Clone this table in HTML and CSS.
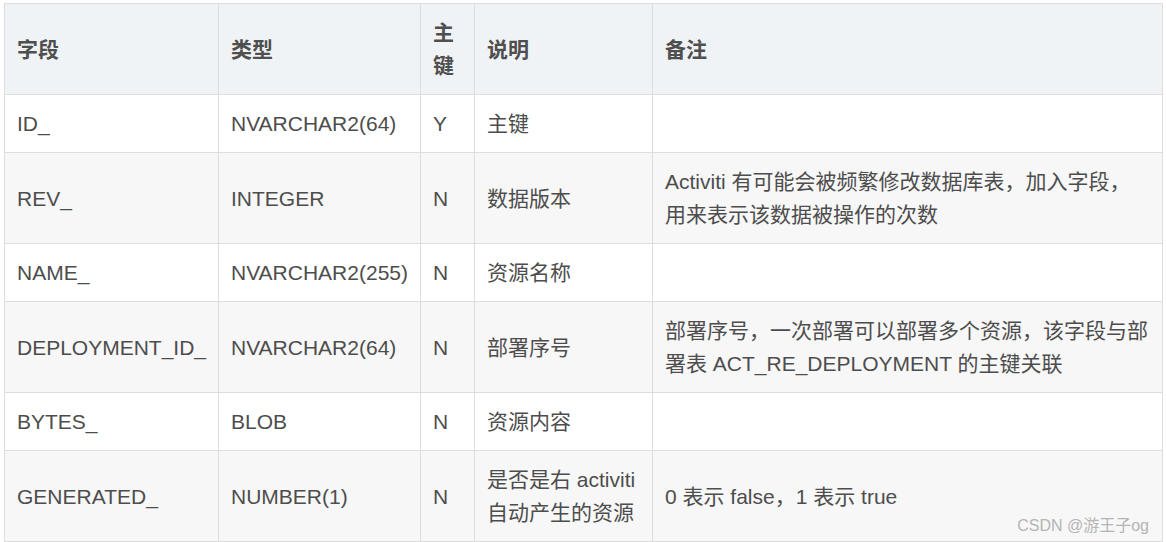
FILE: index.html
```html
<!DOCTYPE html>
<html lang="zh-CN">
<head>
<meta charset="utf-8">
<title>ACT_GE_BYTEARRAY</title>
<link rel="stylesheet" href="styles.css">
</head>
<body>
<div class="page">
  <table class="schema">
    <colgroup>
      <col class="c-field">
      <col class="c-type">
      <col class="c-pk">
      <col class="c-desc">
      <col class="c-note">
    </colgroup>
    <thead>
      <tr>
        <th>字段</th>
        <th>类型</th>
        <th>主键</th>
        <th>说明</th>
        <th>备注</th>
      </tr>
    </thead>
    <tbody>
      <tr>
        <td>ID_</td>
        <td>NVARCHAR2(64)</td>
        <td>Y</td>
        <td>主键</td>
        <td></td>
      </tr>
      <tr>
        <td>REV_</td>
        <td>INTEGER</td>
        <td>N</td>
        <td>数据版本</td>
        <td>Activiti 有可能会被频繁修改数据库表，加入字段，用来表示该数据被操作的次数</td>
      </tr>
      <tr>
        <td>NAME_</td>
        <td>NVARCHAR2(255)</td>
        <td>N</td>
        <td>资源名称</td>
        <td></td>
      </tr>
      <tr>
        <td class="nowrap">DEPLOYMENT_ID_</td>
        <td>NVARCHAR2(64)</td>
        <td>N</td>
        <td>部署序号</td>
        <td>部署序号，一次部署可以部署多个资源，该字段与部署表 ACT_RE_DEPLOYMENT 的主键关联</td>
      </tr>
      <tr>
        <td>BYTES_</td>
        <td>BLOB</td>
        <td>N</td>
        <td>资源内容</td>
        <td></td>
      </tr>
      <tr>
        <td>GENERATED_</td>
        <td>NUMBER(1)</td>
        <td>N</td>
        <td>是否是右 activiti 自动产生的资源</td>
        <td>0 表示 false，1 表示 true</td>
      </tr>
    </tbody>
  </table>
  <div class="watermark">CSDN @游王子og</div>
</div>
</body>
</html>
```

FILE: styles.css
```css
html, body {
  margin: 0;
  padding: 0;
  background: #ffffff;
}

.page {
  position: relative;
  padding: 3px 0 0 4px;
  width: 1158px;
  height: 539px;
  font-family: "Liberation Sans", Arial, "Noto Sans CJK SC", sans-serif;
}

.schema {
  border-collapse: collapse;
  table-layout: fixed;
  width: 1158px;
  font-size: 21px;
  line-height: 33px;
  color: #4d4d4d;
}

.c-field { width: 214px; }
.c-type { width: 202px; }
.c-pk { width: 54px; }
.c-desc { width: 178px; }
.c-note { width: 510px; }

.schema th,
.schema td {
  border: 1px solid #dddddd;
  padding: 12px 12px;
  text-align: left;
  vertical-align: middle;
}

.schema td.nowrap {
  white-space: nowrap;
  overflow: visible;
}

.schema th {
  background: #eff3f5;
  font-weight: bold;
  color: #4f4f4f;
}

.schema tbody tr:nth-child(odd) td {
  background: #ffffff;
}

.schema tbody tr:nth-child(even) td {
  background: #f7f7f7;
}

.watermark {
  position: absolute;
  right: 13px;
  bottom: 5px;
  font-size: 16px;
  line-height: 22px;
  color: #b4b4b4;
  font-family: "Liberation Sans", Arial, "Noto Sans CJK SC", sans-serif;
}
```
